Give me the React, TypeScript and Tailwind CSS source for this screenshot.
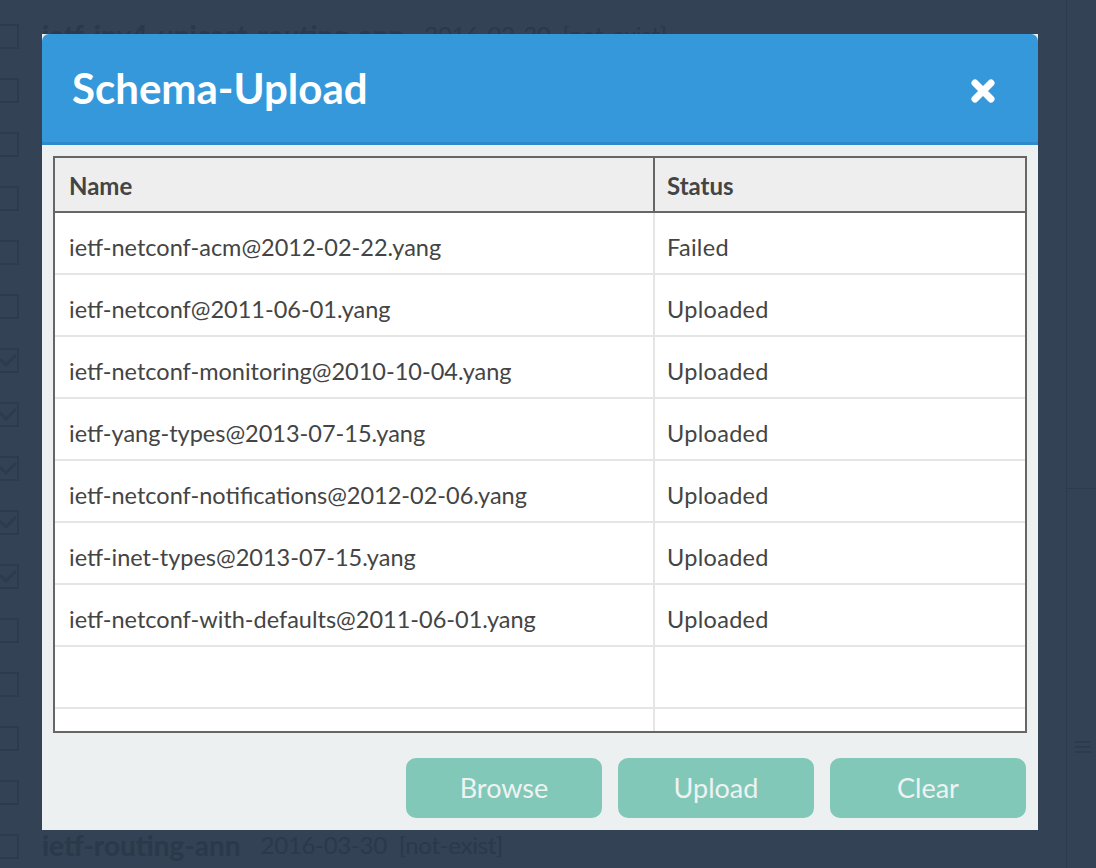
import React from "react";

const bgRows = [
  { name: "ietf-ipv4-unicast-routing-ann", checked: false },
  { name: "ietf-interfaces-ann", checked: false },
  { name: "ietf-ip-ann", checked: false },
  { name: "ietf-ipv6-unicast-routing-ann", checked: false },
  { name: "ietf-system-ann", checked: false },
  { name: "ietf-snmp-ann", checked: false },
  { name: "ietf-netconf-acm", checked: true },
  { name: "ietf-netconf", checked: true },
  { name: "ietf-netconf-monitoring", checked: true },
  { name: "ietf-yang-types", checked: true },
  { name: "ietf-netconf-notifications", checked: true },
  { name: "ietf-inet-types", checked: false },
  { name: "ietf-netconf-with-defaults", checked: false },
  { name: "ietf-routing", checked: false },
  { name: "ietf-x509-cert-to-name", checked: false },
  { name: "ietf-routing-ann", checked: false },
];

const files = [
  { name: "ietf-netconf-acm@2012-02-22.yang", status: "Failed" },
  { name: "ietf-netconf@2011-06-01.yang", status: "Uploaded" },
  { name: "ietf-netconf-monitoring@2010-10-04.yang", status: "Uploaded" },
  { name: "ietf-yang-types@2013-07-15.yang", status: "Uploaded" },
  { name: "ietf-netconf-notifications@2012-02-06.yang", status: "Uploaded" },
  { name: "ietf-inet-types@2013-07-15.yang", status: "Uploaded" },
  { name: "ietf-netconf-with-defaults@2011-06-01.yang", status: "Uploaded" },
  { name: "", status: "" },
  { name: "", status: "" },
];

const CloseIcon = () => (
  <svg width="26" height="26" viewBox="0 0 26 26" className="mt-[5px]">
    <path
      d="M5 5 L21 21 M21 5 L5 21"
      stroke="#fff"
      strokeWidth="7"
      strokeLinecap="round"
      fill="none"
    />
  </svg>
);

const BgCheckbox = ({ checked }: { checked: boolean }) => (
  <div className="ml-[-6px] flex h-[25px] w-[25px] shrink-0 items-center justify-center border-2 border-[#2d3b4c]">
    {checked && (
      <svg width="20" height="16" viewBox="0 0 20 16">
        <path d="M3 6 L9 12 L19 2" stroke="#2d3b4c" strokeWidth="3" fill="none" />
      </svg>
    )}
  </div>
);

export default function App() {
  return (
    <div
      className="relative flex h-[868px] w-[1096px] overflow-hidden bg-[#334255]"
      style={{ fontFamily: "Lato, 'Noto Sans', sans-serif" }}
    >
      {/* page behind the dialog */}
      <div className="flex flex-1 flex-col pt-[24px]">
        {bgRows.map((r, i) => (
          <div key={i} className="flex h-[54px] shrink-0 items-start">
            <BgCheckbox checked={r.checked} />
            <div className="ml-[23px] mt-[-2px] flex h-[25px] items-center whitespace-nowrap text-[#2b394a]">
              <span className="text-[28px] font-bold">{r.name}</span>
              <span className="ml-[20px] text-[24px] tracking-[-0.3px]">2016-03-30</span>
              <span className="ml-[12px] text-[24px] tracking-[-0.3px]">[not-exist]</span>
            </div>
          </div>
        ))}
      </div>
      <div className="flex w-[30px] shrink-0 flex-col border-l border-[#2d3b4c]">
        <div className="h-[489px] border-b border-[#2d3b4c]" />
        <div className="ml-[8px] mt-[252px] flex w-[16px] flex-col gap-[3px]">
          <div className="h-[2px] bg-[#2d3b4c]" />
          <div className="h-[2px] bg-[#2d3b4c]" />
          <div className="h-[2px] bg-[#2d3b4c]" />
        </div>
      </div>

      {/* dialog */}
      <div className="absolute left-[42px] top-[34px] flex h-[796px] w-[996px] flex-col bg-[#ecf0f1]">
        <div className="flex h-[111px] shrink-0 items-center justify-between rounded-t-[7px] border-b-[3px] border-[#2f8acb] bg-[#3598db] pl-[30px] pr-[42px]">
          <h1 className="text-[42px] font-bold text-white">Schema-Upload</h1>
          <CloseIcon />
        </div>
        <div className="mx-[11px] mt-[11px] h-[577px] shrink-0 overflow-hidden border-2 border-[#666] bg-white">
          <div className="flex h-[55px] border-b-2 border-[#666] bg-[#eeeeee] text-[24px] font-bold text-[#444]">
            <div className="flex w-[600px] items-center border-r-2 border-[#666] pl-[14px] pt-[2px]">Name</div>
            <div className="flex flex-1 items-center pl-[12px] pt-[2px]">Status</div>
          </div>
          {files.map((f, i) => (
            <div
              key={i}
              className="flex h-[62px] shrink-0 border-b-2 border-[#e5e5e5] text-[23.5px] text-[#444]"
            >
              <div className="flex w-[600px] items-center border-r-2 border-[#e5e5e5] pl-[14px] pt-[10px]">
                {f.name}
              </div>
              <div className="flex flex-1 items-center pl-[12px] pt-[10px] tracking-[0.3px]">{f.status}</div>
            </div>
          ))}
        </div>
        <div className="mt-[25px] flex justify-end gap-[16px] pr-[12px]">
          {["Browse", "Upload", "Clear"].map((b) => (
            <button
              key={b}
              className="h-[60px] w-[196px] rounded-[10px] bg-[#82c8b9] text-[27px] text-[#eef3f2]"
            >
              {b}
            </button>
          ))}
        </div>
      </div>
    </div>
  );
}
